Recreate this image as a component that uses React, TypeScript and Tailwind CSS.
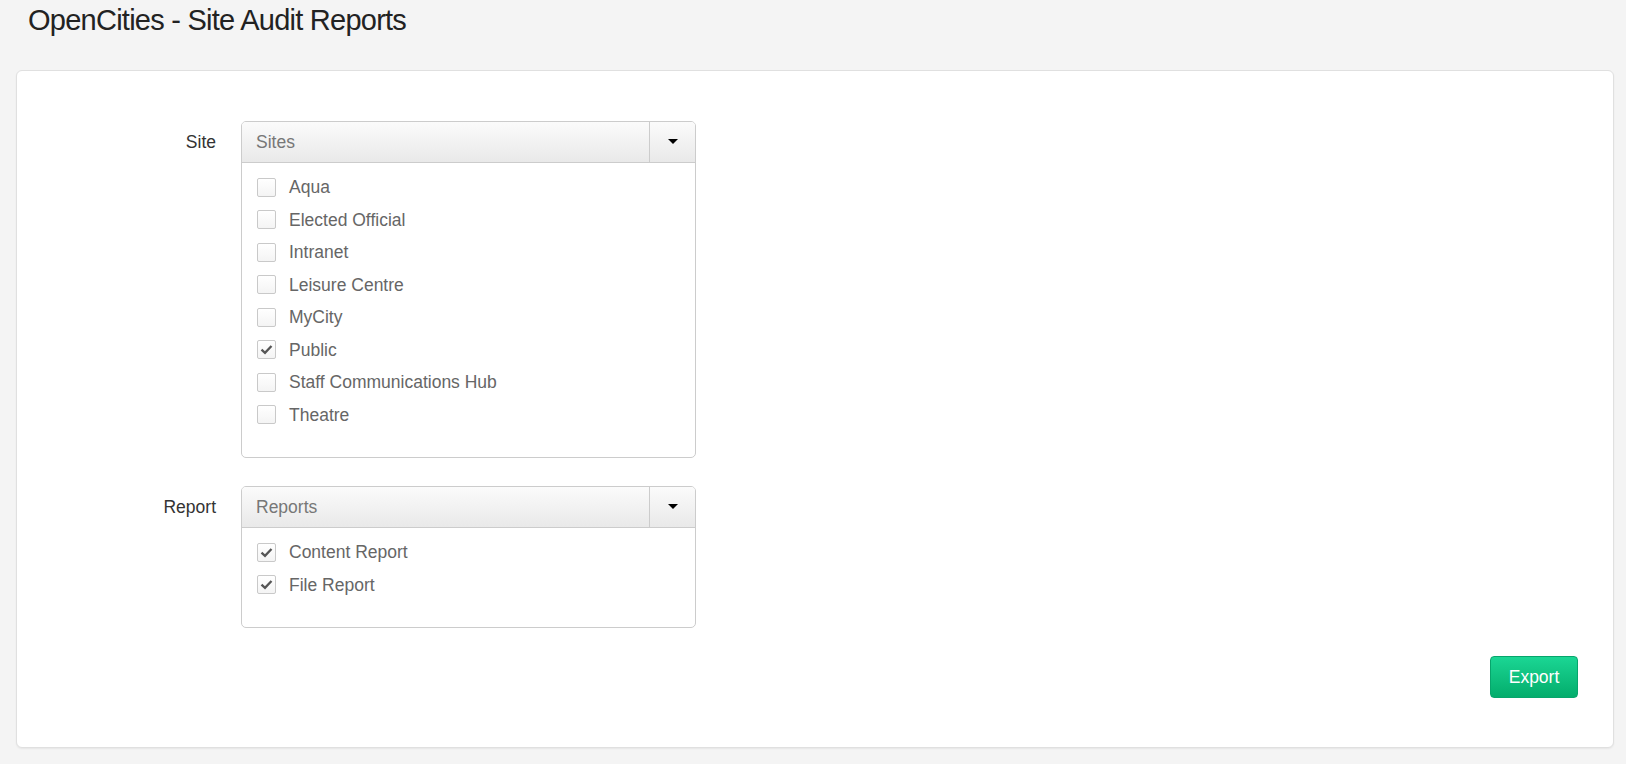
import React from "react";

type Item = { label: string; checked: boolean };

const sites: Item[] = [
  { label: "Aqua", checked: false },
  { label: "Elected Official", checked: false },
  { label: "Intranet", checked: false },
  { label: "Leisure Centre", checked: false },
  { label: "MyCity", checked: false },
  { label: "Public", checked: true },
  { label: "Staff Communications Hub", checked: false },
  { label: "Theatre", checked: false },
];

const reports: Item[] = [
  { label: "Content Report", checked: true },
  { label: "File Report", checked: true },
];

function Check({ checked }: { checked: boolean }) {
  return (
    <span className="flex size-[19px] shrink-0 items-center justify-center rounded-[2px] border border-[#c9c9c9] bg-gradient-to-b from-white to-[#f4f4f4]">
      {checked && (
        <svg width="13" height="11" viewBox="0 0 13 11" fill="none">
          <path d="M1.5 5.6 5 8.8 11.5 2" stroke="#555" strokeWidth="2.3" />
        </svg>
      )}
    </span>
  );
}

function MultiSelect({ title, items, height }: { title: string; items: Item[]; height: string }) {
  return (
    <div className={`flex w-[455px] flex-col overflow-hidden rounded-[5px] border border-[#cccccc] bg-white ${height}`}>
      <div className="flex h-[41px] shrink-0 border-b border-[#cccccc] bg-gradient-to-b from-[#fbfbfb] to-[#e9e9e9]">
        <div className="flex flex-1 items-center pl-[14px] text-[#777]">{title}</div>
        <div className="flex w-[46px] items-center justify-center border-l border-[#cccccc]">
          <span className="h-0 w-0 border-x-[5px] border-t-[5px] border-x-transparent border-t-black" />
        </div>
      </div>
      <ul className="pt-[8px]">
        {items.map((it) => (
          <li key={it.label} className="flex h-[32.5px] items-center gap-[13px] pl-[15px] text-[#666]">
            <Check checked={it.checked} />
            <span>{it.label}</span>
          </li>
        ))}
      </ul>
    </div>
  );
}

export default function App() {
  return (
    <div className="min-h-[764px] bg-[#f4f4f4] pb-[18px] pt-[5px] font-['Liberation_Sans',Arial,sans-serif] text-[17.5px] text-[#333]">
      <h1 className="pl-[28px] text-[29px] leading-[1.1] tracking-[-0.75px] text-[#222]">OpenCities - Site Audit Reports</h1>
      <div className="ml-4 mr-3 mt-[33px] rounded-[6px] border border-[#e0e0e0] bg-white pb-[49px] pt-[50px] shadow-[0_1px_2px_rgba(0,0,0,0.06)]">
        <div className="flex">
          <div className="w-[199px] pt-[8px] text-right">Site</div>
          <div className="ml-[25px]">
            <MultiSelect title="Sites" items={sites} height="h-[337px]" />
          </div>
        </div>
        <div className="mt-[28px] flex">
          <div className="w-[199px] pt-[8px] text-right">Report</div>
          <div className="ml-[25px]">
            <MultiSelect title="Reports" items={reports} height="h-[142px]" />
          </div>
        </div>
        <div className="mt-[28px] flex justify-end pr-[35px]">
          <button className="h-[42px] w-[88px] rounded-[4px] border border-[#07a56c] bg-gradient-to-b from-[#1ad694] to-[#03ad6c] text-white">
            Export
          </button>
        </div>
      </div>
    </div>
  );
}
